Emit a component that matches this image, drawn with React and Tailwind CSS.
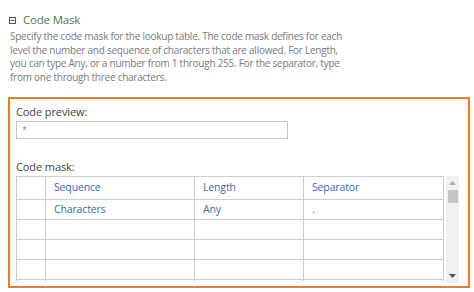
import React from 'react';

const desc = [
  'Specify the code mask for the lookup table. The code mask defines for each',
  'level the number and sequence of characters that are allowed. For Length,',
  'you can type Any, or a number from 1 through 255. For the separator, type',
  'from one through three characters.',
];

const rows = [
  ['', 'Characters', 'Any', '.'],
  ['', '', '', ''],
  ['', '', '', ''],
  ['', '', '', ''],
  ['', '', '', ''],
];

const Cell = ({ children, className = '' }) => (
  <div className={`border-r border-b border-[#cfcfcf] pl-[8px] flex items-center text-[#2f6db5] ${className}`}>{children}</div>
);

const App = () => {
  return (
    <div className="w-[474px] h-[292px] bg-white overflow-hidden" style={{ fontFamily: '"Open Sans", "Noto Sans", sans-serif' }}>
      {/* section title */}
      <div className="flex items-center pl-[9px] pt-[13px] h-[27px]">
        <svg width="7" height="7" viewBox="0 0 7 7" className="mr-[7px]">
          <rect x="0.5" y="0.5" width="6" height="6" fill="none" stroke="#4a5a70" />
          <line x1="1.5" y1="3.5" x2="5.5" y2="3.5" stroke="#4a5a70" />
        </svg>
        <span className="text-[11.5px] text-[#4f7d3c] leading-none tracking-[-0.2px]">Code Mask</span>
      </div>
      <div className="pl-[10px] pt-[3px] text-[10px] leading-[13.5px] text-[#7a7a7a] tracking-[-0.25px]">
        {desc.map((l) => (
          <div key={l} className="whitespace-nowrap">{l}</div>
        ))}
      </div>

      {/* orange box */}
      <div className="ml-[8px] mt-[13px] w-[462px] h-[191px] border-2 border-[#f47a20] pl-[6px] pt-[5px] overflow-hidden">
        <div className="text-[11px] leading-[15px] text-[#444] tracking-[-0.1px]">Code preview:</div>
        <div className="mt-[2px] w-[272px] h-[18px] border border-[#c8c8c8] pl-[5px] text-[9px] text-[#888] leading-[16px]">*</div>

        <div className="mt-[20px] text-[11px] leading-[15px] text-[#444] tracking-[-0.1px]">Code mask:</div>
        <div className="mt-[2px] flex gap-[2px]">
          <div className="w-[428px] h-[105px] overflow-hidden border-l border-t border-[#cfcfcf] text-[10.5px] tracking-[-0.15px]">
            <div className="grid grid-cols-[29px_149px_109px_140px]">
              <Cell className="h-[23px]" />
              <Cell className="h-[23px]">Sequence</Cell>
              <Cell className="h-[23px]">Length</Cell>
              <Cell className="h-[23px]">Separator</Cell>
              {rows.map((r, i) =>
                r.map((c, j) => (
                  <Cell key={`${i}-${j}`} className="h-[20px]">{c}</Cell>
                ))
              )}
            </div>
          </div>
          <div className="w-[13px] h-[107px] bg-[#f0f0f0] flex flex-col items-center">
            <svg width="7" height="4" viewBox="0 0 7 4" className="mt-[5px]">
              <polygon points="3.5,0 7,4 0,4" fill="#b0b0b0" />
            </svg>
            <div className="mt-[5px] w-[10px] h-[13px] bg-[#c4c4c4]" />
            <div className="flex-1" />
            <svg width="7" height="4" viewBox="0 0 7 4" className="mb-[5px]">
              <polygon points="0,0 7,0 3.5,4" fill="#505050" />
            </svg>
          </div>
        </div>
      </div>
    </div>
  );
};

export default App;
